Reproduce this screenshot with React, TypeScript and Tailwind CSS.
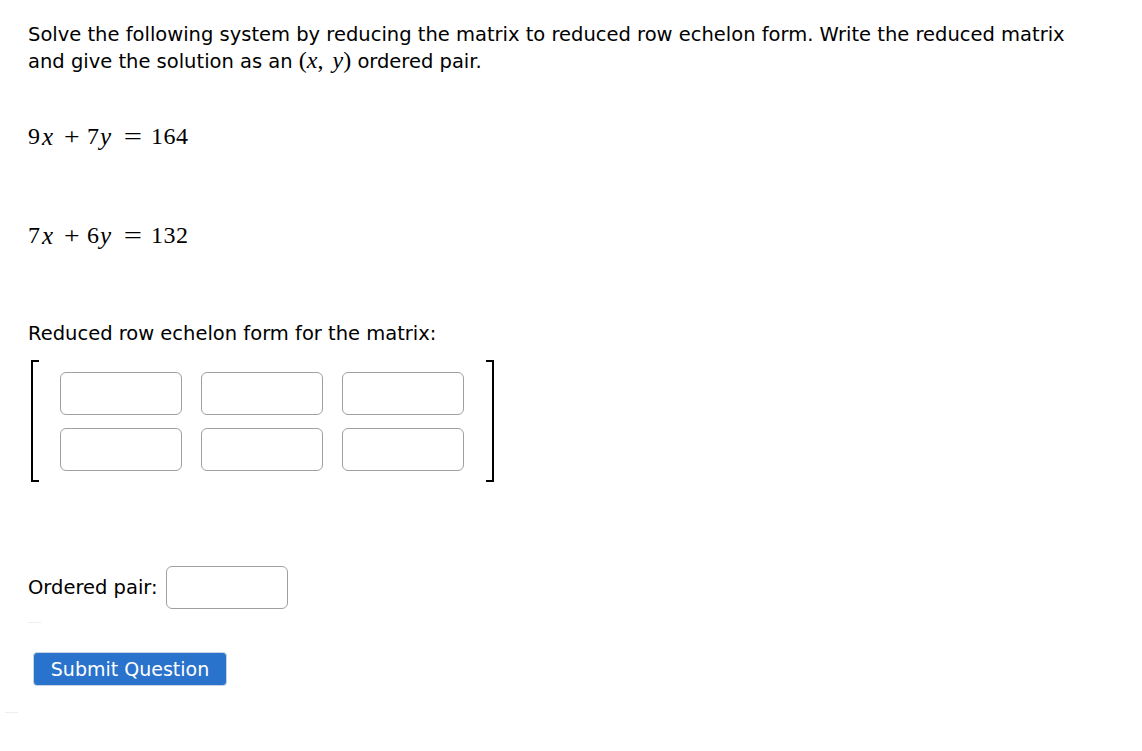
import React from "react";

const sans = { fontFamily: '"DejaVu Sans", sans-serif' };
const serif = { fontFamily: '"Liberation Serif", "DejaVu Serif", serif' };

function Box() {
  return <div className="w-[122px] h-[43px] rounded-[6px] border border-[#a0a0a0] bg-white" />;
}

function Eq({ a, b, c, className }: { a: string; b: string; c: string; className: string }) {
  return (
    <div className={`${className} flex items-center text-[24px] leading-[27px]`} style={serif}>
      <span className="w-[14px] shrink-0">{a}</span>
      <i className="w-[17px] shrink-0 text-[25px]">x</i>
      <span className="flex w-[28px] shrink-0 justify-center pr-[2px]">
        <span className="inline-block scale-x-[1.15]">+</span>
      </span>
      <span className="w-[13px] shrink-0">{b}</span>
      <i className="w-[15px] shrink-0 text-[25px]">y</i>
      <span className="flex w-[36px] shrink-0 justify-center">
        <span className="inline-block scale-x-[1.35]">=</span>
      </span>
      <span className="tracking-[0.5px]">{c}</span>
    </div>
  );
}

export default function App() {
  return (
    <div className="min-h-[751px] w-[1142px] bg-white text-black" style={sans}>
      <div className="px-[28px] pt-[21px]">
        <p className="text-[19.5px] leading-[27px] whitespace-nowrap">
          Solve the following system by reducing the matrix to reduced row echelon form. Write the reduced matrix
          <br />
          and give the solution as an{" "}
          <span style={serif} className="text-[24px] leading-[20px]">
            (<i>x</i>,<span className="inline-block w-[9px]" />
            <i>y</i>)
          </span>{" "}
          ordered pair.
        </p>

        <Eq className="mt-[48px]" a="9" b="7" c="164" />
        <Eq className="mt-[72px]" a="7" b="6" c="132" />

        <div className="mt-[71px] text-[19.5px] leading-[27px]">Reduced row echelon form for the matrix:</div>

        <div className="mt-[13px] ml-[3px] flex h-[122px] w-[463px] items-stretch">
          <div className="w-[8px] border-y-2 border-l-2 border-black" />
          <div className="ml-[21px] flex flex-col gap-[13px] pt-[12px]">
            <div className="flex gap-[19px]">
              <Box />
              <Box />
              <Box />
            </div>
            <div className="flex gap-[19px]">
              <Box />
              <Box />
              <Box />
            </div>
          </div>
          <div className="flex-1" />
          <div className="w-[8px] border-y-2 border-r-2 border-black" />
        </div>

        <div className="mt-[84px] flex items-center gap-[8px]">
          <span className="text-[19.5px] leading-[27px]">Ordered pair:</span>
          <Box />
        </div>
        <div className="mt-[13px] h-px w-[13px] bg-[#eeeeee]" />

        <div className="mt-[29px] ml-[5px]">
          <button className="h-[34px] w-[194px] rounded-[4px] border border-[#c8d3e0] bg-[#2a73cc] text-[19px] leading-[32px] text-white">
            Submit Question
          </button>
        </div>
      </div>
      <div className="mt-[26px] ml-[5px] h-px w-[13px] bg-[#eeeeee]" />
    </div>
  );
}
